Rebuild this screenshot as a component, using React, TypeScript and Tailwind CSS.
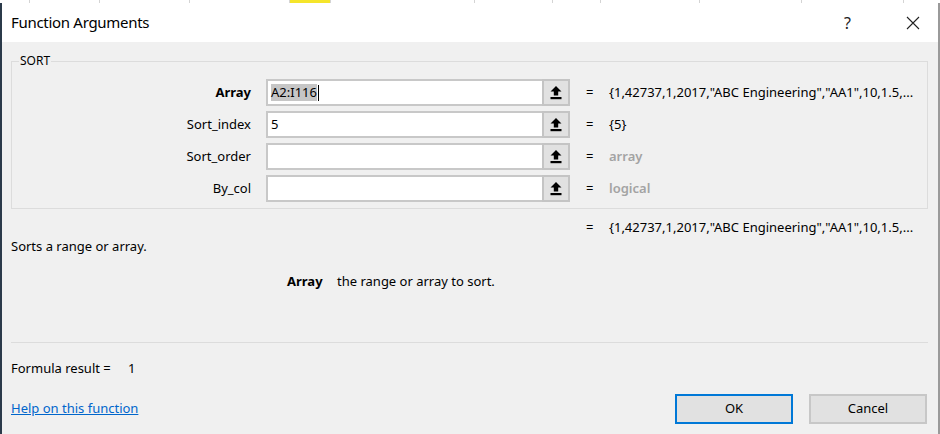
import React from 'react'

const font = { fontFamily: '"Noto Sans", "Open Sans", sans-serif' }

// grid lines of the sheet peeking above the dialog
const sheetLines = [29, 99, 189, 289, 330, 474, 552, 600, 699, 801, 903]

function RefButton() {
  return (
    <div className="flex h-full w-[28px] items-center justify-center border-2 border-[#c4c4c4] bg-[#e1e1e1]">
      <svg width="12" height="15" viewBox="0 0 12 15">
        <path d="M6 1 L11.5 6.5 L8.2 6.5 L8.2 10.5 L3.8 10.5 L3.8 6.5 L0.5 6.5 Z" fill="#000" />
        <rect x="0.5" y="12" width="11" height="2.2" fill="#000" />
      </svg>
    </div>
  )
}

type Arg = { label: string; value: string; bold?: boolean; result: string; hint?: boolean }

const args: Arg[] = [
  { label: 'Array', value: 'A2:I116', bold: true, result: '{1,42737,1,2017,"ABC Engineering","AA1",10,1.5,...' },
  { label: 'Sort_index', value: '5', result: '{5}' },
  { label: 'Sort_order', value: '', result: 'array', hint: true },
  { label: 'By_col', value: '', result: 'logical', hint: true },
]

function ArgRow({ arg }: { arg: Arg }) {
  return (
    <div className="flex h-[27px] items-center">
      <div className={`w-[239px] text-right text-[13px] text-black ${arg.bold ? 'font-bold' : ''}`}>{arg.label}</div>
      <div className="ml-[15px] flex h-full w-[304px]">
        <div className="flex flex-1 items-center border-2 border-r-0 border-[#c8c8c8] bg-white pl-[3px] text-[13px] text-black">
          {arg.bold ? (
            <>
              <span className="bg-[#c6c6c6] leading-[17px]">{arg.value}</span>
              <span className="ml-[1px] h-[16px] w-[1px] bg-black" />
            </>
          ) : (
            arg.value
          )}
        </div>
        <RefButton />
      </div>
      <div className="ml-[16px] w-[23px] text-[13px] text-black">=</div>
      <div className={`text-[13px] ${arg.hint ? 'font-semibold text-[#a3a3a3]' : 'text-black'}`}>{arg.result}</div>
    </div>
  )
}

export default function App() {
  return (
    <div style={font} className="flex h-[434px] w-[940px] flex-col overflow-hidden bg-white">
      {/* sheet strip */}
      <div className="relative h-[3px] w-full shrink-0 bg-white">
        {sheetLines.map(x => (
          <div key={x} className="absolute top-0 h-[3px] w-[1px] bg-[#d4d4d4]" style={{ left: x }} />
        ))}
        <div className="absolute top-0 left-[290px] h-[3px] w-[40px] bg-[#f5e52a]" />
      </div>

      <div className="flex flex-1 border-l-2 border-r-2 border-l-[#2b3a4a] border-r-[#9a9a9a]">
        <div className="flex flex-1 flex-col">
          {/* title bar */}
          <div className="flex h-[39px] shrink-0 items-center bg-white pl-[9px] pr-[18px]">
            <div className="text-[15px] tracking-[-0.3px] text-black">Function Arguments</div>
            <div className="ml-auto text-[16px] text-[#222]">?</div>
            <svg className="ml-[55px]" width="14" height="14" viewBox="0 0 14 14">
              <path d="M1 1 L13 13 M13 1 L1 13" stroke="#222" strokeWidth="1.1" />
            </svg>
          </div>

          {/* body */}
          <div className="flex flex-1 flex-col bg-[#f0f0f0] pl-[9px] pr-[10px]">
            <div className="relative mt-[19px] flex h-[148px] flex-col gap-[5px] border border-[#dcdcdc] pt-[17px]">
              <div className="absolute -top-[10px] left-[7px] bg-[#f0f0f0] px-[1px] text-[12px] text-black">SORT</div>
              {args.map(a => (
                <ArgRow key={a.label} arg={a} />
              ))}
            </div>

            <div className="mt-[10px] flex h-[18px] items-center pl-[575px] text-[13px] text-black">
              <span className="w-[23px]">=</span>
              <span>{args[0].result}</span>
            </div>

            <div className="flex h-[20px] items-center text-[13px] text-black">Sorts a range or array.</div>

            <div className="mt-[15px] flex h-[20px] items-center pl-[276px] text-[13px] text-black">
              <span className="w-[50px] font-bold">Array</span>
              <span>the range or array to sort.</span>
            </div>

            <div className="mt-[50px] h-[1px] w-[917px] bg-[#dcdcdc]" />

            <div className="mt-[16px] flex h-[20px] items-center text-[13px] text-black">
              <span className="w-[117px]">Formula result =</span>
              <span>1</span>
            </div>

            <div className="mt-[15px] flex h-[30px] items-center">
              <a className="text-[13px] text-[#0066cc] underline">Help on this function</a>
              <button className="ml-auto h-[30px] w-[118px] border-2 border-[#0078d7] bg-[#e1e1e1] text-[13px] text-black">OK</button>
              <button className="ml-[16px] mr-[1px] h-[30px] w-[118px] border-2 border-[#c7c7c7] bg-[#e1e1e1] text-[13px] text-black">Cancel</button>
            </div>
          </div>
        </div>
      </div>
    </div>
  )
}
